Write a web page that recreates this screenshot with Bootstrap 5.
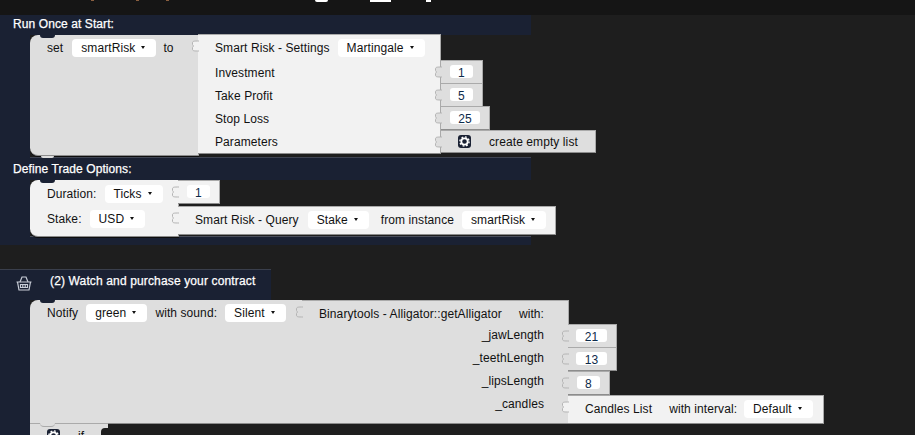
<!DOCTYPE html>
<html lang="en">
<head>
    <meta charset="UTF-8">
    <meta name="viewport" content="width=device-width, initial-scale=1.0">
    <title>Bot Builder</title>
    <link href="https://cdn.jsdelivr.net/npm/bootstrap@5.3.2/dist/css/bootstrap.min.css" rel="stylesheet">
    <script src="https://cdn.jsdelivr.net/npm/bootstrap@5.3.2/dist/js/bootstrap.bundle.min.js"></script>
    <style>
        html, body { height: 100%; }
        body {
            background: #1e1e1e;
            font-family: "Liberation Sans", Arial, sans-serif;
            font-size: 12px;
            line-height: 14px;
            letter-spacing: .09px;
            color: #111;
            overflow: hidden;
        }
        .top-strip { height: 15px; background: #151515; }
        .top-strip span { display: block; height: 2px; background: #fff; }
        .top-strip .tb1 { width: 3px; height: 1px; margin-left: 91px; background: #8a5f40; }
        .top-strip .tb2 { width: 3px; height: 1px; margin-left: 42px; background: #8a5f40; }
        .top-strip .tb3 { width: 3px; height: 1px; margin-left: 27px; background: #8a5f40; }
        .top-strip .tb4 { width: 13px; margin-left: 146px; border-radius: 0 0 6px 6px; }
        .top-strip .tb5 { width: 21px; margin-left: 42px; }
        .top-strip .tb6 { width: 5px; margin-left: 35px; }

        .canvas-area { position: absolute; left: 0; top: 0; width: 915px; height: 435px; overflow: hidden; }

        /* navy statement wrappers with their cut-outs */
        .wrap-navy { position: absolute; left: 0; background: #1a2133; }
        .hole { position: absolute; left: 30px; right: 0; background: #1e1e1e; }
        #wrap1 { top: 15px; width: 531px; height: 230px; }
        #hole1a { top: 20px; height: 123px; border-bottom: 1px solid #3f4452; }
        #hole1b { top: 165px; height: 57px; border-bottom: 1px solid #4a4e5a; }
        #wrap2 { top: 269px; width: 271px; height: 166px; border-top: 1px solid #3a3f4c; }
        #hole2 { top: 30px; bottom: 0; }
        .wrap-title { position: absolute; color: #fff; -webkit-text-stroke: .25px #fff; white-space: nowrap; }
        #title1 { left: 13px; top: 2px; }
        #title2 { left: 13px; top: 147px; }
        #title3 { left: 50px; top: 4px; letter-spacing: .14px; }
        .basket { position: absolute; left: 16px; top: 6px; width: 16px; height: 15px; }

        /* blocks */
        .blk { position: absolute; white-space: nowrap; border-top: 1px solid #aaa; border-right: 1px solid #aaa; border-bottom: 1px solid #8c8c8c; }
        .blk-g { background: #dedede; }
        .blk-w { background: #f2f2f2; }
        .blk-g .tabp { fill: #dedede; }
        .blk-w .tabp { fill: #f2f2f2; }
        .tabp { position: absolute; left: -7px; top: 5px; width: 8px; height: 12px; stroke: #b4b4b4; stroke-width: 1; }
        .stmt { border-radius: 8px 0 0 8px; box-shadow: 0 1px 0 #0e0e0e; border-top: 0; }
        .stmt::before { content: ""; position: absolute; left: 10px; top: 0; width: 15px; height: 3px; background: #1a2133; border-radius: 0 0 7px 7px; }
        .stmt::after { content: ""; position: absolute; left: 11px; bottom: -3px; width: 13px; height: 2px; background: inherit; border-radius: 0 0 6px 6px; }
        .blk-row { display: flex; align-items: center; height: 18px; }
        .fld { display: inline-flex; align-items: center; height: 18px; padding: 0 11px 0 9px; background: #fff; border-radius: 4px; }
        .fld::after { content: ""; margin-left: 6px; margin-bottom: 1px; border-style: solid; border-width: 3px 2.5px 0; border-color: #111 transparent transparent; }
        .num { position: absolute; left: 9px; top: 4px; width: 23px; height: 13px; line-height: 16px; text-align: center; background: #fff; border-radius: 3px; color: #0c2a4a; }
        .wide-num { left: 8px; width: 31px; }
        #v-sl .wide-num { left: 9px; width: 30px; }
        .gear { width: 13px; height: 13px; flex: none; }

        #b-set { left: 30px; top: 35px; width: 169px; height: 121px; }
        #b-set .blk-row { margin: 4px 0 0 17px; }
        #b-set .fld { margin: 0 7px 0 9px; }
        #b-smart { left: 198px; top: 34px; width: 243px; height: 120px; padding: 4px 0 0 17px; }
        #b-smart .fld { margin-left: 8px; }
        .arg-row { display: flex; align-items: center; height: 23px; }
        .blk-row + .arg-row { margin-top: 4px; }
        .val { height: 24px; border-left: 0; }
        #v-inv { left: 441px; top: 60px; width: 42px; }
        #v-tp { left: 441px; top: 83px; width: 42px; }
        #v-sl { left: 441px; top: 106px; width: 49px; }
        #v-list { left: 441px; top: 130px; width: 155px; height: 23px; padding-left: 17px; display: flex; align-items: center; }
        #v-list .gear { margin-right: 18px; }
        #b-def { left: 30px; top: 180px; width: 149px; height: 57px; }
        #b-def::after { display: none; }
        #b-def .blk-row:first-child { margin: 5px 0 0 17px; }
        #b-def .blk-row + .blk-row { margin: 7px 0 0 17px; }
        #b-def .fld { margin-left: 8px; }
        #v-dur { left: 178px; top: 180px; width: 42px; height: 24px; }
        #b-query { left: 178px; top: 206px; width: 378px; height: 29px; padding: 4px 0 0 17px; }
        #b-query .fld { margin: 0 12px 0 9px; }
        #b-query .fld:last-child { margin: 0 0 0 8px; }
        #b-notify { left: 30px; top: 300px; width: 273px; height: 124px; border-radius: 8px 0 0 0; box-shadow: none; }
        #b-notify::after { display: none; }
        #b-notify .blk-row { margin: 4px 0 0 17px; }
        #b-notify .fld { margin: 0 8px; }
        #b-allig { left: 302px; top: 300px; width: 267px; height: 124px; padding: 4px 24px 0 17px; }
        #b-allig .first-line { display: flex; justify-content: space-between; height: 18px; align-items: center; }
        #b-allig .arg-row { justify-content: flex-end; }
        #v-jaw { left: 568px; top: 324px; width: 49px; }
        #v-teeth { left: 568px; top: 347px; width: 49px; }
        #v-lips { left: 568px; top: 371px; width: 42px; }
        #v-cand { left: 568px; top: 395px; width: 256px; height: 29px; padding: 4px 0 0 17px; }
        #v-cand .fld { margin-left: 7px; }
        #b-if { left: 30px; top: 423px; width: 78px; height: 20px; padding: 5px 0 0 17px; border: 0; border-top: 1px solid #aaa; }
        #b-if::before { content: ""; position: absolute; left: 10px; top: -1px; width: 15px; height: 4px; background: #dedede; border-bottom: 1px solid #aaa; border-radius: 0 0 7px 7px; }
        #b-if::after { content: ""; position: absolute; right: 0; top: 4px; width: 7px; height: 14px; background: #1e1e1e; border-radius: 4px 0 0 4px; }
        #b-if .gear { margin-right: 18px; }
        .ml-word { margin-left: 17px; }
    </style>
</head>
<body>
    <svg width="0" height="0" class="d-block">
        <defs>
            <symbol id="tab-shape" viewBox="0 0 8 12"><path d="M8 1C3 1 1.5 1 1.5 3v1.5C1.5 5.5 2.500 5.500 2.500 6S1.500 6.500 1.500 7.500V9c0 2 1.500 2 6.500 2"/></symbol>
            <symbol id="gear-icon" viewBox="0 0 13 13">
                <rect width="13" height="13" rx="3" fill="#1a2133"/>
                <circle cx="6.500" cy="6.500" r="3.200" fill="none" stroke="#fff" stroke-width="1.800"/>
                <circle cx="6.500" cy="6.500" r="4.600" fill="none" stroke="#fff" stroke-width="1.400" stroke-dasharray="1.800 1.800"/>
            </symbol>
        </defs>
    </svg>

    <div class="top-strip d-flex">
        <span class="tb1"></span><span class="tb2"></span><span class="tb3"></span><span class="tb4"></span><span class="tb5"></span><span class="tb6"></span>
    </div>

    <div class="canvas-area">
        <div class="wrap-navy" id="wrap1">
            <div class="hole" id="hole1a"></div>
            <div class="hole" id="hole1b"></div>
            <div class="wrap-title" id="title1">Run Once at Start:</div>
            <div class="wrap-title" id="title2">Define Trade Options:</div>
        </div>

        <div class="blk blk-g stmt" id="b-set">
            <div class="blk-row">set<span class="fld">smartRisk</span>to</div>
        </div>
        <div class="blk blk-w" id="b-smart">
            <svg class="tabp"><use href="#tab-shape"/></svg>
            <div class="blk-row">Smart Risk - Settings<span class="fld">Martingale</span></div>
            <div class="arg-row">Investment</div>
            <div class="arg-row">Take Profit</div>
            <div class="arg-row">Stop Loss</div>
            <div class="arg-row">Parameters</div>
        </div>
        <div class="blk blk-g val" id="v-inv"><svg class="tabp"><use href="#tab-shape"/></svg><div class="num">1</div></div>
        <div class="blk blk-g val" id="v-tp"><svg class="tabp"><use href="#tab-shape"/></svg><div class="num">5</div></div>
        <div class="blk blk-g val" id="v-sl"><svg class="tabp"><use href="#tab-shape"/></svg><div class="num wide-num">25</div></div>
        <div class="blk blk-g" id="v-list"><svg class="tabp"><use href="#tab-shape"/></svg><svg class="gear"><use href="#gear-icon"/></svg>create empty list</div>

        <div class="blk blk-w stmt" id="b-def">
            <div class="blk-row">Duration:<span class="fld">Ticks</span></div>
            <div class="blk-row">Stake:<span class="fld">USD</span></div>
        </div>
        <div class="blk blk-w" id="v-dur"><svg class="tabp"><use href="#tab-shape"/></svg><div class="num">1</div></div>
        <div class="blk blk-w" id="b-query">
            <svg class="tabp"><use href="#tab-shape"/></svg>
            <div class="blk-row">Smart Risk - Query<span class="fld">Stake</span>from instance<span class="fld">smartRisk</span></div>
        </div>

        <div class="wrap-navy" id="wrap2">
            <div class="hole" id="hole2"></div>
            <svg class="basket" viewBox="0 0 16 15" fill="none" stroke="#c9ced8" stroke-width="1.200">
                <path d="M4 6 6 1h4l2 5"/>
                <path d="M.5 6h15M1.500 6 3 14h10l1.500-8"/>
                <path d="M4.500 8.500h7v3h-7zM6.800 8.500v3M9.200 8.500v3"/>
            </svg>
            <div class="wrap-title" id="title3">(2) Watch and purchase your contract</div>
        </div>

        <div class="blk blk-g stmt" id="b-notify">
            <div class="blk-row">Notify<span class="fld">green</span>with sound:<span class="fld">Silent</span></div>
        </div>
        <div class="blk blk-g" id="b-allig">
            <svg class="tabp"><use href="#tab-shape"/></svg>
            <div class="first-line"><span>Binarytools - Alligator::getAlligator</span><span>with:</span></div>
            <div class="arg-row">_jawLength</div>
            <div class="arg-row">_teethLength</div>
            <div class="arg-row">_lipsLength</div>
            <div class="arg-row">_candles</div>
        </div>
        <div class="blk blk-g val" id="v-jaw"><svg class="tabp"><use href="#tab-shape"/></svg><div class="num wide-num">21</div></div>
        <div class="blk blk-g val" id="v-teeth"><svg class="tabp"><use href="#tab-shape"/></svg><div class="num wide-num">13</div></div>
        <div class="blk blk-g val" id="v-lips"><svg class="tabp"><use href="#tab-shape"/></svg><div class="num">8</div></div>
        <div class="blk blk-w" id="v-cand">
            <svg class="tabp"><use href="#tab-shape"/></svg>
            <div class="blk-row">Candles List<span class="ml-word">with interval:</span><span class="fld">Default</span></div>
        </div>
        <div class="blk blk-g d-flex align-items-start" id="b-if"><svg class="gear"><use href="#gear-icon"/></svg>if</div>
    </div>
</body>
</html>
